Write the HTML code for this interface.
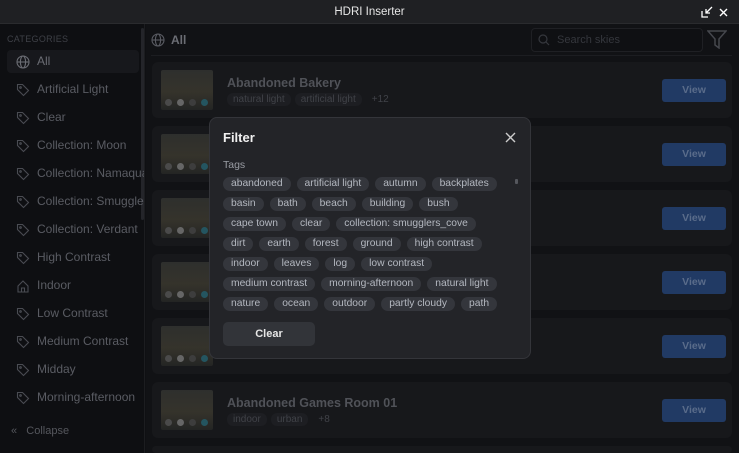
<!DOCTYPE html>
<html style="width:739px;height:453px;overflow:hidden"><head><meta charset="utf-8"><style>
*{box-sizing:border-box;margin:0;padding:0}
body{width:739px;height:453px;overflow:hidden;background:#0f1013;font-family:"Liberation Sans",sans-serif;position:relative}
.abs{position:absolute}
.title{left:0;top:0;width:739px;height:24px;background:#1f2023;color:#e6e6e6;font-size:11.5px;text-align:center;line-height:24px;border-bottom:1px solid #2a2b2e}
.side{left:0;top:24px;width:145px;height:429px;background:#0e0f12;border-right:1px solid #1c1d20}
.sb{left:141px;top:28px;width:3px;height:192px;background:#24252a;border-radius:2px}
.cat{left:7px;font-size:9px;color:#3e4047;top:34px;letter-spacing:.3px}
.item{left:7px;width:132px;height:23px;color:#5a5c63;font-size:12px;line-height:23px;padding-left:30px}
.item svg{position:absolute;left:9px;top:5px}
.sel{background:#17181c;border-radius:4px;color:#6b6d74}
.main{left:146px;top:24px;width:593px;height:429px;background:#111215}
.card{left:152px;width:580px;height:56px;background:#17181b;border-radius:6px}
.thumb{position:absolute;left:9px;top:8px;width:52px;height:40px;border-radius:2px;background:linear-gradient(#2e2f2d,#35332b 55%,#242524)}
.thumb i{position:absolute;bottom:4px;width:7px;height:7px;border-radius:50%;background:#4a4a4a}
.ct{position:absolute;left:75px;top:14px;font-weight:bold;font-size:12.5px;color:#505258}
.tg{position:absolute;left:75px;top:32px;font-size:10px;color:#404248}
.tg span{background:#1d1e22;border-radius:6px;padding:1px 6px;margin-right:4px}
.view{position:absolute;left:510px;top:17px;width:64px;height:23px;background:#213a64;border-radius:3px;color:#5a6c8a;font-size:10.5px;font-weight:bold;text-align:center;line-height:23px}
.dlg{left:209px;top:117px;width:322px;height:242px;background:#232428;border:1px solid #34353a;border-radius:8px}
.tags{position:absolute;left:13px;top:56px;width:300px;line-height:20px;font-size:10.3px;white-space:nowrap}
.tags span{display:inline-block;background:#34363c;color:#b4b8c0;border-radius:8px;height:14px;line-height:14px;padding:0 8px;margin-right:6px}
</style></head><body>
<div class="abs title">HDRI Inserter</div>
<svg class="abs" style="left:701px;top:6px" width="12" height="12" viewBox="0 0 12 12" fill="none" stroke="#fff" stroke-width="1.3"><path d="M1 5v6h6M11 1L5 7M5 3v4h4"/></svg>
<svg class="abs" style="left:719px;top:8px" width="9" height="9" viewBox="0 0 9 9" stroke="#fff" stroke-width="1.4"><path d="M1 1l7 7M8 1L1 8"/></svg>
<div class="abs side"></div>
<div class="abs sb"></div>
<div class="abs cat">CATEGORIES</div>
<div class="abs item sel" style="top:50px">All<svg width="14" height="14" viewBox="0 0 14 14" fill="none" stroke="#6b6d74" stroke-width="1.1"><circle cx="7" cy="7" r="6"/><ellipse cx="7" cy="7" rx="2.6" ry="6"/><path d="M1 7h12"/></svg></div>
<div id="items"></div>
<div class="abs" style="left:11px;top:425px;color:#55575d;font-size:11px">«&nbsp;&nbsp;&nbsp;Collapse</div>
<div class="abs main"></div>
<svg class="abs" style="left:151px;top:33px" width="14" height="14" viewBox="0 0 14 14" fill="none" stroke="#5a5c63" stroke-width="1.1"><circle cx="7" cy="7" r="6"/><ellipse cx="7" cy="7" rx="2.6" ry="6"/><path d="M1 7h12"/></svg>
<div class="abs" style="left:171px;top:33px;color:#6b6d74;font-weight:bold;font-size:12px">All</div>
<div class="abs" style="left:151px;top:55px;width:581px;height:1px;background:#1c1d21"></div>
<div class="abs" style="left:531px;top:28px;width:172px;height:24px;border:1px solid #1f2024;border-radius:4px;background:#0f1013;color:#35373d;font-size:11px;line-height:22px;padding-left:25px">Search skies</div>
<svg class="abs" style="left:538px;top:34px" width="12" height="12" fill="none" stroke="#35373d" stroke-width="1.2"><circle cx="5" cy="5" r="4"/><path d="M8 8l3 3"/></svg>
<svg class="abs" style="left:707px;top:30px" width="20" height="19" fill="none" stroke="#45474d" stroke-width="1.5"><path d="M1 1h18l-7 8v9l-4-3V9z"/></svg>
<div id="cards"></div>
<div class="abs dlg">
<div style="position:absolute;left:13px;top:12px;color:#f0f0f0;font-weight:bold;font-size:13px">Filter</div>
<svg style="position:absolute;left:295px;top:14px" width="11" height="11" stroke="#ccc" stroke-width="1.4"><path d="M1 1l9 9M10 1L1 10"/></svg>
<div style="position:absolute;left:13px;top:41px;color:#999ca3;font-size:10.5px">Tags</div>
<div style="position:absolute;left:305px;top:61px;width:3px;height:5px;background:#55575d;border-radius:1px"></div>
<div class="tags">
<span>abandoned</span><span>artificial light</span><span>autumn</span><span>backplates</span><br>
<span>basin</span><span>bath</span><span>beach</span><span>building</span><span>bush</span><br>
<span>cape town</span><span>clear</span><span>collection: smugglers_cove</span><br>
<span>dirt</span><span>earth</span><span>forest</span><span>ground</span><span>high contrast</span><br>
<span>indoor</span><span>leaves</span><span>log</span><span>low contrast</span><br>
<span>medium contrast</span><span>morning-afternoon</span><span>natural light</span><br>
<span>nature</span><span>ocean</span><span>outdoor</span><span>partly cloudy</span><span>path</span>
</div>
<div style="position:absolute;left:13px;top:204px;width:92px;height:24px;background:#323439;border-radius:5px;color:#e6e6e6;font-size:11px;font-weight:bold;text-align:center;line-height:24px">Clear</div>
</div>
<script>
var names=["Artificial Light","Clear","Collection: Moon","Collection: Namaqua","Collection: Smugglers","Collection: Verdant","High Contrast","Indoor","Low Contrast","Medium Contrast","Midday","Morning-afternoon"];
var h="";names.forEach(function(n,i){var y=78+i*28;var ic=n=="Indoor"?'<path d="M2 7l5-5 5 5v6H2z M5.5 13V9h3v4"/>':'<path d="M1.5 1.5h5l6 6-5 5-6-6z"/><circle cx="4.5" cy="4.5" r="0.8"/>';
h+='<div class="abs item" style="top:'+y+'px;overflow:hidden;width:137px;white-space:nowrap">'+n+'<svg width="14" height="14" viewBox="0 0 14 14" fill="none" stroke="#4a4c53" stroke-width="1.1">'+ic+'</svg></div>';});
document.getElementById("items").innerHTML=h;
var cards=[["Abandoned Bakery",["natural light","artificial light"],"+12"],["",[],""],["",[],""],["",[],""],["",[],""],["Abandoned Games Room 01",["indoor","urban"],"+8"]];
var c="";cards.forEach(function(k,i){var y=62+i*64;c+='<div class="abs card" style="top:'+y+'px"><div class="thumb"><i style="left:4px"></i><i style="left:16px;background:#666"></i><i style="left:28px;background:#3d3d3d"></i><i style="left:40px;background:#245560"></i></div>'+(k[0]?'<div class="ct">'+k[0]+'</div><div class="tg">'+k[1].map(function(t){return"<span>"+t+"</span>"}).join("")+'<span style="background:none">'+k[2]+'</span></div>':'')+'<div class="view">View</div></div>';});
c+='<div class="abs card" style="top:446px;height:7px"></div>';
document.getElementById("cards").innerHTML=c;
</script>
</body></html>
